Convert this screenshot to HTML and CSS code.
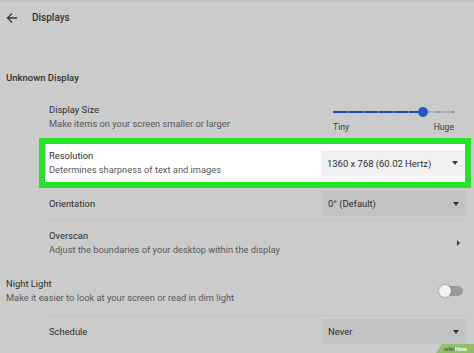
FILE: index.html
```html
<!DOCTYPE html>
<html lang="en">

<head>
    <meta charset="UTF-8">
    <meta name="viewport" content="width=device-width, initial-scale=1.0">
    <title>Displays</title>
    <link rel="stylesheet" href="styles.css">
</head>

<body>
    <header class="topbar">
        <svg class="voltar" width="12" height="12" viewBox="0 0 12 12">
            <path d="M11 6H1.5M6 1.5L1.5 6L6 10.5" fill="none" stroke="#3a3a3a" stroke-width="1.3" />
        </svg>
        <span class="titulo">Displays</span>
    </header>

    <div class="secao">Unknown Display</div>

    <div class="linha recuo tamanho">
        <div class="textos">
            <p class="rotulo">Display Size</p>
            <p class="descricao">Make items on your screen smaller or larger</p>
        </div>
        <div class="slider">
            <div class="trilha">
                <div class="ativa"></div>
                <span class="marca" style="left: 15px"></span>
                <span class="marca" style="left: 30px"></span>
                <span class="marca" style="left: 45px"></span>
                <span class="marca" style="left: 60px"></span>
                <span class="marca" style="left: 75px"></span>
                <span class="marca clara" style="left: 105px"></span>
                <span class="marca clara" style="left: 119px"></span>
                <div class="polegar"></div>
            </div>
            <div class="extremos">
                <span>Tiny</span>
                <span>Huge</span>
            </div>
        </div>
    </div>

    <div class="linha destaque">
        <div class="textos">
            <p class="rotulo">Resolution</p>
            <p class="descricao">Determines sharpness of text and images</p>
        </div>
        <div class="seletor claro">
            <span>1360 x 768 (60.02 Hertz)</span>
            <span class="seta"></span>
        </div>
    </div>

    <div class="linha recuo simples divisor">
        <p class="rotulo">Orientation</p>
        <div class="seletor">
            <span>0° (Default)</span>
            <span class="seta"></span>
        </div>
    </div>

    <div class="linha recuo overscan">
        <div class="textos">
            <p class="rotulo">Overscan</p>
            <p class="descricao">Adjust the boundaries of your desktop within the display</p>
        </div>
        <span class="seta-direita"></span>
    </div>

    <div class="linha noturna">
        <div class="textos">
            <p class="rotulo">Night Light</p>
            <p class="descricao">Make it easier to look at your screen or read in dim light</p>
        </div>
        <div class="chave">
            <span class="bolinha"></span>
        </div>
    </div>

    <div class="linha recuo simples topo">
        <p class="rotulo">Schedule</p>
        <div class="seletor">
            <span>Never</span>
            <span class="seta"></span>
        </div>
    </div>

    <div class="marca-dagua"><span class="wiki">wiki</span><span class="how">How</span></div>
</body>

</html>
```

FILE: styles.css
```css
* {
    box-sizing: border-box;
}

body {
    margin: 0;
    background-color: #cbcbcb;
    font-family: Roboto, "Liberation Sans", sans-serif;
    color: #2b2b2b;
    width: 474px;
    height: 353px;
    overflow: hidden;
    position: relative;
}

p {
    margin: 0;
}

.topbar {
    height: 33px;
    display: flex;
    align-items: center;
    padding-left: 6px;
    border-top: 2px solid #c3c3c3;
}

.titulo {
    margin-left: 14px;
    font-size: 10px;
    font-weight: 500;
    color: #333333;
}

.secao {
    margin-top: 29px;
    height: 30px;
    display: flex;
    align-items: center;
    padding-left: 6px;
    font-size: 9.5px;
    font-weight: 500;
    color: #333333;
}

.linha {
    display: flex;
    align-items: center;
    justify-content: space-between;
}

.recuo {
    margin-left: 49px;
    margin-right: 8px;
}

.rotulo {
    font-size: 9.4px;
    line-height: 14px;
    color: #2e2e2e;
}

.descricao {
    font-size: 9.3px;
    line-height: 14px;
    color: #585858;
}

.tamanho {
    height: 46px;
    padding-top: 3px;
    margin-right: 20px;
}

.slider {
    width: 121px;
    padding-top: 10px;
}

.trilha {
    position: relative;
    height: 2px;
    background-color: #a9b3c6;
}

.ativa {
    width: 90px;
    height: 2px;
    background-color: #1d4fa8;
}

.marca {
    position: absolute;
    top: 0;
    width: 1px;
    height: 2px;
    background-color: #7f96c4;
}

.marca.clara {
    background-color: #5d6f93;
}

.polegar {
    position: absolute;
    left: 85px;
    top: -4px;
    width: 10px;
    height: 10px;
    border-radius: 50%;
    background-color: #1f58be;
}

.extremos {
    display: flex;
    justify-content: space-between;
    margin-top: 9px;
    font-size: 8.6px;
    color: #3a3a3a;
}

.destaque {
    height: 50px;
    margin-left: 39px;
    margin-right: 3px;
    padding-left: 4px;
    background-color: #ffffff;
    border: 6px solid #27e22a;
}

.seletor {
    width: 144px;
    height: 25px;
    display: flex;
    align-items: center;
    justify-content: space-between;
    padding: 0 7px 0 6px;
    background-color: #c2c2c2;
    font-size: 9.45px;
    color: #2e2e2e;
}

.seletor.claro {
    height: 26px;
    background-color: #f1f1f1;
}

.seta {
    width: 0;
    height: 0;
    border-left: 3.5px solid transparent;
    border-right: 3.5px solid transparent;
    border-top: 4px solid #3a3a3a;
}

.simples {
    height: 32px;
}

.divisor {
    border-bottom: 1px solid #c1c1c1;
}

.topo {
    border-top: 1px solid #c1c1c1;
}

.overscan {
    height: 47px;
    padding-bottom: 1px;
}

.seta-direita {
    margin-right: 6px;
    width: 0;
    height: 0;
    border-top: 3px solid transparent;
    border-bottom: 3px solid transparent;
    border-left: 3px solid #3a3a3a;
}

.noturna {
    height: 48px;
    padding-left: 6px;
    padding-bottom: 1px;
    margin-right: 11px;
}

.chave {
    position: relative;
    width: 22px;
    height: 10px;
    border-radius: 5px;
    background-color: #9a9a9a;
}

.bolinha {
    position: absolute;
    left: -2px;
    top: -1px;
    width: 12px;
    height: 12px;
    border-radius: 50%;
    background-color: #f4f4f4;
    box-shadow: 0 0 2px rgba(0, 0, 0, 0.4);
}

.marca-dagua {
    position: absolute;
    right: 0;
    bottom: 0;
    width: 38px;
    height: 9px;
    background-color: #8fbf6b;
    clip-path: polygon(6px 0, 100% 0, 100% 100%, 0 100%);
    font-size: 6px;
    font-weight: bold;
    line-height: 9px;
    padding-left: 8px;
}

.wiki {
    color: #4c6d33;
}

.how {
    color: #ffffff;
}
```
